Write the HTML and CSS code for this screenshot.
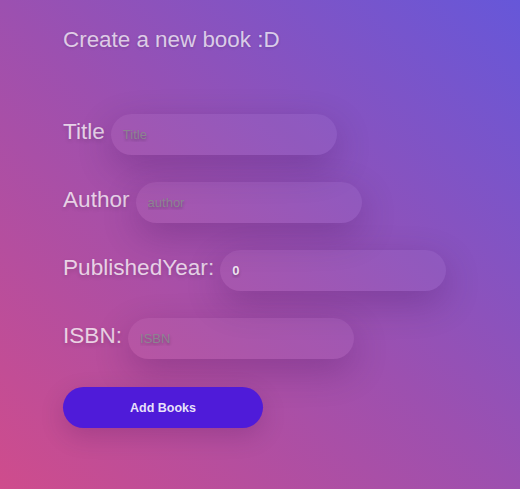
FILE: index.html
```html
<!DOCTYPE html>
<html lang="en">
<head>
<meta charset="utf-8">
<title>Create a new book</title>
<link rel="stylesheet" href="styles.css">
</head>
<body>
<div class="page">
  <h2 class="heading">Create a new book :D</h2>
  <form class="book-form">
    <div class="row">
      <label class="label" for="title">Title</label>
      <input class="field" id="title" type="text" placeholder="Title">
    </div>
    <div class="row">
      <label class="label" for="author">Author</label>
      <input class="field" id="author" type="text" placeholder="author">
    </div>
    <div class="row">
      <label class="label" for="year">PublishedYear:</label>
      <input class="field" id="year" type="text" value="0">
    </div>
    <div class="row">
      <label class="label" for="isbn">ISBN:</label>
      <input class="field" id="isbn" type="text" placeholder="ISBN">
    </div>
    <button class="submit" type="button">Add Books</button>
  </form>
</div>
</body>
</html>
```
FILE: styles.css
```css
html, body {
  margin: 0;
  height: 100%;
}
body {
  background: linear-gradient(to top right, #cf4c8c 0%, #9c50b0 50%, #6657d9 100%);
  font-family: "Liberation Sans", Arial, sans-serif;
  overflow: hidden;
}
.page {
  padding: 27px 0 0 63px;
}
.heading {
  margin: 0 0 62px 0;
  font-size: 22.4px;
  line-height: 25px;
  font-weight: normal;
  color: rgba(255, 255, 255, 0.72);
  text-shadow: 0 1px 3px rgba(0, 0, 0, 0.15);
}
.book-form {
  display: flex;
  flex-direction: column;
  align-items: flex-start;
}
.row {
  display: flex;
  align-items: baseline;
  gap: 6px;
  height: 41px;
  margin-bottom: 27px;
}
.label {
  font-size: 22.6px;
  color: rgba(255, 255, 255, 0.75);
  text-shadow: 0 2px 4px rgba(0, 0, 0, 0.15);
}
.field {
  box-sizing: border-box;
  width: 226px;
  height: 41px;
  padding: 0 12px;
  border: none;
  outline: none;
  border-radius: 21px;
  background: rgba(255, 255, 255, 0.045);
  box-shadow: 0 12px 36px rgba(50, 0, 70, 0.24);
  font-family: "Liberation Sans", Arial, sans-serif;
  font-size: 13px;
  font-weight: bold;
  color: rgba(255, 255, 255, 0.85);
  text-shadow: 0 2px 3px rgba(0, 0, 0, 0.25);
}
.field::placeholder {
  font-weight: normal;
  font-size: 13px;
  color: #8c8391;
}
.submit {
  margin-top: 1px;
  width: 200px;
  height: 41px;
  border: none;
  border-radius: 21px;
  background: #4f1bd9;
  color: rgba(255, 255, 255, 0.88);
  font-family: "Liberation Sans", Arial, sans-serif;
  font-size: 12.5px;
  font-weight: bold;
  box-shadow: 0 8px 24px rgba(50, 0, 70, 0.18);
  cursor: pointer;
}
```
